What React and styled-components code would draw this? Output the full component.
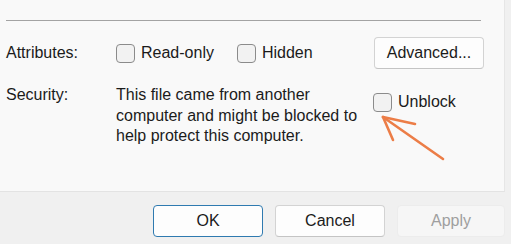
import styled, { createGlobalStyle, css } from "styled-components";

// 파일 속성 창 아래쪽 (특성 / 보안 / 버튼)

const GlobalStyle = createGlobalStyle`
  html, body {
    margin: 0;
    padding: 0;
    background: #f0f0f0;
  }
  body {
    font-family: "Liberation Sans", Arial, sans-serif;
    font-size: 16px;
    color: #1b1b1b;
  }
`;

const Window = styled.div`
  width: 511px;
  height: 244px;
  overflow: hidden;
  background: #f0f0f0;
`;

// 흰 패널
const Panel = styled.div`
  position: relative;
  box-sizing: border-box;
  width: 505px;
  height: 192px;
  padding: 20px 20px 0 6px;
  background: #f9f9f9;
  border-right: 1px solid #e6e6e6;
  border-bottom: 1px solid #e3e3e3;
`;

const Separator = styled.hr`
  margin: 0 3px 0 0;
  border: none;
  border-top: 1px solid #a3a3a3;
`;

const Row = styled.div`
  display: flex;
  align-items: ${(p) => (p.$top ? "flex-start" : "center")};
  margin-top: ${(p) => p.$gap}px;
`;

const Label = styled.div`
  width: 110px;
  flex-shrink: 0;
  line-height: 20px;
`;

const Check = styled.label`
  display: flex;
  align-items: center;
  gap: 6px;
  line-height: 20px;
  margin-right: ${(p) => p.$space || 0}px;
  margin-top: ${(p) => p.$offset || 0}px;
`;

const Box = styled.span`
  box-sizing: border-box;
  width: 19px;
  height: 19px;
  border: 1px solid #8b8b8b;
  border-radius: 4px;
  background: #f2f2f2;
`;

const Message = styled.p`
  width: 250px;
  margin: 0 7px 0 0;
  line-height: 20.5px;
`;

const Button = styled.button`
  box-sizing: border-box;
  width: ${(p) => p.$width || 110}px;
  height: 32px;
  padding: 0;
  font-family: "Liberation Sans", Arial, sans-serif;
  font-size: 16px;
  color: #1b1b1b;
  background: #fdfdfd;
  border: 1px solid #d3d3d3;
  border-bottom-color: #c4c4c4;
  border-radius: 4px;

  ${(p) =>
    p.$default &&
    css`
      border: 1px solid #2f7ab0;
    `}

  ${(p) =>
    p.disabled &&
    css`
      color: #9f9f9f;
      background: #f6f6f6;
      border-color: #ececec;
    `}
`;

const AdvancedButton = styled(Button)`
  margin-left: auto;
  height: 32px;
`;

const Footer = styled.div`
  display: flex;
  justify-content: flex-end;
  gap: 12px;
  padding: 13px 6px 0 0;
`;

// 주황색 화살표 (주석)
const Arrow = styled.svg`
  position: absolute;
  left: 0;
  top: 0;
  pointer-events: none;
`;

export default function App() {
  return (
    <Window>
      <GlobalStyle />
      <Panel>
        <Separator />
        <Row $gap={16}>
          <Label>Attributes:</Label>
          <Check $space={23}>
            <Box />
            Read-only
          </Check>
          <Check>
            <Box />
            Hidden
          </Check>
          <AdvancedButton>Advanced...</AdvancedButton>
        </Row>
        <Row $gap={16} $top>
          <Label>Security:</Label>
          <Message>
            This file came from another computer and might be blocked to help
            protect this computer.
          </Message>
          <Check $offset={7}>
            <Box />
            Unblock
          </Check>
        </Row>
        <Arrow width="505" height="192" viewBox="0 0 505 192">
          <g
            stroke="#ec7d47"
            strokeWidth="2.6"
            strokeLinecap="round"
            fill="none"
          >
            <line x1="383" y1="117" x2="443" y2="159" />
            <line x1="383" y1="117" x2="415" y2="124" />
            <line x1="383" y1="117" x2="393" y2="140" />
          </g>
        </Arrow>
      </Panel>
      <Footer>
        <Button $default>OK</Button>
        <Button>Cancel</Button>
        <Button $width={108} disabled>
          Apply
        </Button>
      </Footer>
    </Window>
  );
}
